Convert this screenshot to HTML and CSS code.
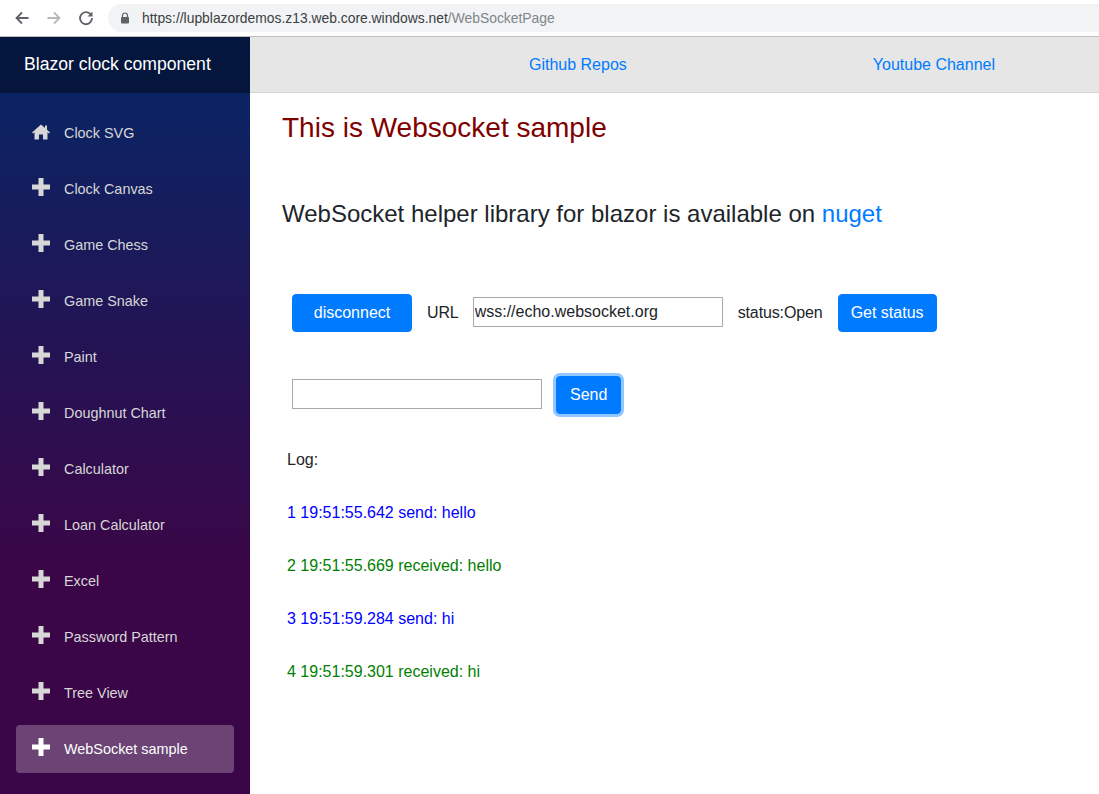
FILE: index.html
```html
<!DOCTYPE html>
<html lang="en">
<head>
  <meta charset="UTF-8">
  <title>WebSocket sample</title>
  <link rel="stylesheet" href="styles.css">
</head>
<body>
  <!-- Browser toolbar -->
  <div class="browser-bar">
    <svg class="browser-icon" viewBox="0 0 16 16"><path d="M14.5 8H2.5M8 2.5L2.5 8L8 13.5" fill="none" stroke="#5f6368" stroke-width="1.8"/></svg>
    <svg class="browser-icon" viewBox="0 0 16 16"><path d="M1.5 8H13.5M8 2.5L13.5 8L8 13.5" fill="none" stroke="#b6b8bb" stroke-width="1.8"/></svg>
    <svg class="browser-icon" viewBox="0 0 16 16"><path d="M13.2 5.2A6 6 0 1 0 14 8" fill="none" stroke="#5f6368" stroke-width="1.8"/><path d="M14.5 1.5V6.5H9.5Z" fill="#5f6368"/></svg>
    <div class="address">
      <svg class="lock" viewBox="0 0 10 12"><path d="M2.5 5V3.500a2.500 2.500 0 0 1 5 0V5" fill="none" stroke="#5f6368" stroke-width="1.2"/><rect x="1" y="5" width="8" height="6.5" rx="1" fill="#5f6368"/></svg>
      <span class="address-text">https://lupblazordemos.z13.web.core.windows.net</span><span class="address-path">/WebSocketPage</span>
    </div>
  </div>

  <div class="app">
    <!-- Sidebar -->
    <div class="sidebar">
      <div class="brand">Blazor clock component</div>
      <ul class="nav">
        <li class="nav-item"><svg class="nav-icon" viewBox="0 -2 18 18"><path d="M9 0.500L0 8.500L1 9.500L2.500 8.300V15.500H7V10.500H11V15.500H15.500V8.300L17 9.500L18 8.500L15 5.800V1.500H13V4L9 0.500Z"/></svg>Clock SVG</li>
        <li class="nav-item"><svg class="nav-icon" viewBox="0 0 18 18"><path d="M6.500 0H11.500V6.500H18V11.500H11.500V18H6.500V11.500H0V6.500H6.500Z"/></svg>Clock Canvas</li>
        <li class="nav-item"><svg class="nav-icon" viewBox="0 0 18 18"><path d="M6.500 0H11.500V6.500H18V11.500H11.500V18H6.500V11.500H0V6.500H6.500Z"/></svg>Game Chess</li>
        <li class="nav-item"><svg class="nav-icon" viewBox="0 0 18 18"><path d="M6.500 0H11.500V6.500H18V11.500H11.500V18H6.500V11.500H0V6.500H6.500Z"/></svg>Game Snake</li>
        <li class="nav-item"><svg class="nav-icon" viewBox="0 0 18 18"><path d="M6.500 0H11.500V6.500H18V11.500H11.500V18H6.500V11.500H0V6.500H6.500Z"/></svg>Paint</li>
        <li class="nav-item"><svg class="nav-icon" viewBox="0 0 18 18"><path d="M6.500 0H11.500V6.500H18V11.500H11.500V18H6.500V11.500H0V6.500H6.500Z"/></svg>Doughnut Chart</li>
        <li class="nav-item"><svg class="nav-icon" viewBox="0 0 18 18"><path d="M6.500 0H11.500V6.500H18V11.500H11.500V18H6.500V11.500H0V6.500H6.500Z"/></svg>Calculator</li>
        <li class="nav-item"><svg class="nav-icon" viewBox="0 0 18 18"><path d="M6.500 0H11.500V6.500H18V11.500H11.500V18H6.500V11.500H0V6.500H6.500Z"/></svg>Loan Calculator</li>
        <li class="nav-item"><svg class="nav-icon" viewBox="0 0 18 18"><path d="M6.500 0H11.500V6.500H18V11.500H11.500V18H6.500V11.500H0V6.500H6.500Z"/></svg>Excel</li>
        <li class="nav-item"><svg class="nav-icon" viewBox="0 0 18 18"><path d="M6.500 0H11.500V6.500H18V11.500H11.500V18H6.500V11.500H0V6.500H6.500Z"/></svg>Password Pattern</li>
        <li class="nav-item"><svg class="nav-icon" viewBox="0 0 18 18"><path d="M6.500 0H11.500V6.500H18V11.500H11.500V18H6.500V11.500H0V6.500H6.500Z"/></svg>Tree View</li>
        <li class="nav-item active"><svg class="nav-icon" viewBox="0 0 18 18"><path d="M6.500 0H11.500V6.500H18V11.500H11.500V18H6.500V11.500H0V6.500H6.500Z"/></svg>WebSocket sample</li>
      </ul>
    </div>

    <!-- Main -->
    <div class="main">
      <div class="top-row">
        <a class="top-link" href="#">Github Repos</a>
        <a class="top-link" href="#">Youtube Channel</a>
      </div>
      <div class="content">
        <h3 class="page-title">This is Websocket sample</h3>
        <h4 class="subtitle">WebSocket helper library for blazor is available on <a href="#">nuget</a></h4>

        <div class="controls">
          <button class="btn btn-wide">disconnect</button>
          <span class="label">URL</span>
          <input class="field url-field" type="text" value="wss://echo.websocket.org">
          <span class="label">status:Open</span>
          <button class="btn btn-status">Get status</button>
        </div>

        <div class="controls send-row">
          <input class="field" type="text">
          <button class="btn btn-focus">Send</button>
        </div>

        <div class="log">
          <div class="log-line">Log:</div>
          <div class="log-line sent">1 19:51:55.642 send: hello</div>
          <div class="log-line received">2 19:51:55.669 received: hello</div>
          <div class="log-line sent">3 19:51:59.284 send: hi</div>
          <div class="log-line received">4 19:51:59.301 received: hi</div>
        </div>
      </div>
    </div>
  </div>
</body>
</html>
```

FILE: styles.css
```css
:root {
  --primary-color: #007bff;
  --text-color: #212529;
  --font-family: 'Liberation Sans', Arial, sans-serif;
}
html, body {
  height: 100%;
}
body {
  display: flex;
  flex-direction: column;
  margin: 0;
  overflow: hidden;
  background-color: #fff;
  color: var(--text-color);
  font-family: var(--font-family);
  font-size: 16px;
}
.browser-bar {
  display: flex;
  align-items: center;
  gap: 8px;
  flex: none;
  height: 36px;
  padding-left: 14px;
  background-color: #fff;
  border-bottom: 1px solid #bdbdbd;
}
.browser-icon {
  width: 16px;
  height: 16px;
  margin-right: 8px;
}
.address {
  display: flex;
  align-items: center;
  flex: 1;
  height: 28px;
  margin: 0 0 0 -2px;
  padding-left: 12px;
  background-color: #f1f3f4;
  border-radius: 14px 0 0 14px;
  font-size: 13.87px;
}
.lock {
  width: 10px;
  height: 12px;
  margin-right: 12px;
}
.address-text {
  color: #3c4043;
}
.address-path {
  color: #80868b;
}
.app {
  display: flex;
  flex: 1;
  min-height: 0;
}
.sidebar {
  flex: none;
  width: 250px;
  background-image: linear-gradient(180deg, #052767 0%, #3a0647 70%);
}
.brand {
  height: 56px;
  padding-left: 24px;
  background-color: rgba(0, 0, 0, 0.4);
  color: #fff;
  font-size: 17.6px;
  line-height: 55px;
}
.nav {
  margin: 0;
  padding: 16px 16px 0;
  list-style: none;
}
.nav-item {
  display: flex;
  align-items: center;
  height: 48px;
  margin-bottom: 8px;
  padding-left: 16px;
  border-radius: 4px;
  color: #d7d7d7;
  font-size: 14.4px;
}
.nav-item.active {
  background-color: rgba(255, 255, 255, 0.25);
  color: #fff;
}
.nav-icon {
  flex: none;
  width: 18px;
  height: 18px;
  margin: 0 14px 4px 0;
  fill: currentColor;
}
.main {
  flex: 1;
  min-width: 0;
}
.top-row {
  display: flex;
  justify-content: flex-end;
  gap: 246px;
  box-sizing: border-box;
  height: 56px;
  padding-right: 104px;
  background-color: #e6e6e6;
  border-bottom: 1px solid #d6d5d5;
  line-height: 55px;
}
.top-link, .subtitle a {
  color: var(--primary-color);
  text-decoration: none;
}
.content {
  padding: 18px 32px 0;
}
.page-title {
  margin: 0;
  color: #800000;
  font-size: 28px;
  font-weight: 400;
  line-height: 34px;
}
.subtitle {
  margin: 54px 0 0;
  font-size: 24px;
  font-weight: 400;
  line-height: 29px;
}
.controls {
  display: flex;
  align-items: center;
  gap: 15px;
  margin: 66px 0 0 10px;
  height: 38px;
}
.send-row {
  margin-top: 44px;
  gap: 14px;
}
.label {
  letter-spacing: -0.12px;
}
.btn {
  box-sizing: border-box;
  height: 38px;
  padding: 0 13px;
  background-color: var(--primary-color);
  border: 1px solid var(--primary-color);
  border-radius: 4px;
  color: #fff;
  font-family: var(--font-family);
  font-size: 16px;
}
.btn-wide {
  width: 120px;
}
.btn-status {
  padding: 0 12px;
}
.btn-focus {
  box-shadow: 0 0 0 3px rgba(38, 143, 255, 0.5);
}
.field {
  box-sizing: border-box;
  width: 250px;
  height: 30px;
  margin-bottom: 2px;
  padding: 1px;
  background-color: #fff;
  border: 1px solid #a9a9a9;
  color: var(--text-color);
  font-family: var(--font-family);
  font-size: 16px;
}
.url-field {
  margin-left: -1px;
}
.log {
  margin: 28px 0 0 5px;
}
.log-line {
  height: 53px;
  line-height: 36px;
}
.sent {
  color: #0000ff;
}
.received {
  color: #008000;
}
```
